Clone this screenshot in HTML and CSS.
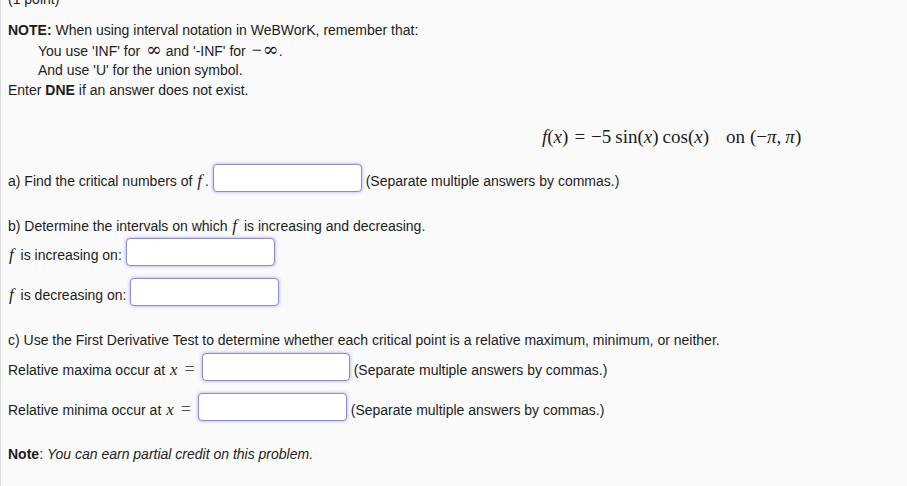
FILE: index.html
```html
<!DOCTYPE html>
<html>
<head>
<meta charset="utf-8">
<link rel="stylesheet" href="styles.css">
</head>
<body>
<div class="page">
  <div class="line points">(1 point)</div>
  <div class="note-block">
    <div class="line"><b>NOTE:</b> When using interval notation in WeBWorK, remember that:</div>
    <div class="line indent">You use 'INF' for <span class="inf">∞</span> and '-INF' for <span class="inf"><span class="minus">−</span>∞</span>.</div>
    <div class="line indent">And use 'U' for the union symbol.</div>
    <div class="line">Enter <b>DNE</b> if an answer does not exist.</div>
  </div>
  <div class="display">
    <span class="mi">f</span><span class="mr">(</span><span class="mi">x</span><span class="mr">)</span><span class="mr op">=</span><span class="mr">−5</span><span class="mr fn">sin</span><span class="mr">(</span><span class="mi">x</span><span class="mr">)</span><span class="mr fn">cos</span><span class="mr">(</span><span class="mi">x</span><span class="mr">)</span><span class="mr on">on</span><span class="mr">(−</span><span class="mi">π</span><span class="mr">,</span><span class="mi pi2">π</span><span class="mr">)</span>
  </div>
  <div class="row row-a">a) Find the critical numbers of <span class="mi fv">f</span>. <span class="ans w149"></span> (Separate multiple answers by commas.)</div>
  <div class="line row-b">b) Determine the intervals on which <span class="mi fv">f</span> is increasing and decreasing.</div>
  <div class="row row-inc"><span class="mi fv">f</span> is increasing on: <span class="ans w149"></span></div>
  <div class="row row-dec"><span class="mi fv">f</span> is decreasing on: <span class="ans w149"></span></div>
  <div class="line row-c">c) Use the First Derivative Test to determine whether each critical point is a relative maximum, minimum, or neither.</div>
  <div class="row row-max">Relative maxima occur at <span class="mi xv">x</span><span class="eq">=</span><span class="ans w148"></span> (Separate multiple answers by commas.)</div>
  <div class="row row-min">Relative minima occur at <span class="mi xv">x</span><span class="eq">=</span><span class="ans w149"></span> (Separate multiple answers by commas.)</div>
  <div class="line row-note"><b>Note</b>: <i>You can earn partial credit on this problem.</i></div>
</div>
</body>
</html>
```
FILE: styles.css
```css
html, body {
  margin: 0;
  padding: 0;
}
body {
  background: #fafafa;
  font-family: "Liberation Sans", Arial, sans-serif;
  font-size: 14px;
  color: #1c1c1c;
  height: 486px;
  overflow: hidden;
  border-left: 1px solid #d8d8d8;
  box-sizing: border-box;
}
.page {
  padding-left: 7px;
}
.line {
  height: 20px;
  line-height: 20px;
  white-space: nowrap;
}
.points {
  margin-top: -11px;
}
.note-block {
  margin-top: 11px;
}
.indent {
  padding-left: 30px;
}
.inf {
  font-family: "DejaVu Serif", "Liberation Serif", serif;
  font-size: 19px;
  line-height: 1;
  padding-left: 2px;
}
.minus {
  font-family: "Liberation Serif", serif;
  font-size: 18px;
  padding-right: 1px;
}
.mi {
  font-family: "Liberation Serif", "DejaVu Serif", serif;
  font-style: italic;
  font-size: 17px;
}
.fv {
  padding-left: 1px;
  padding-right: 3px;
}
.xv {
  padding-left: 1px;
}
.mr {
  font-family: "Liberation Serif", "DejaVu Serif", serif;
  font-size: 19px;
}
.display {
  margin-top: 27px;
  padding-left: 534px;
  height: 20px;
  line-height: 20px;
  white-space: nowrap;
}
.display .mi {
  font-size: 19px;
}
.display .op {
  padding: 0 6px;
}
.display .fn {
  padding-left: 4px;
}
.display .on {
  padding-left: 17px;
  padding-right: 5px;
}
.display .pi2 {
  padding-left: 4px;
}
.row {
  height: 20px;
  line-height: 20px;
  white-space: nowrap;
}
.ans {
  display: inline-block;
  box-sizing: border-box;
  height: 28px;
  border: 1px solid #8c8cc8;
  border-radius: 4px;
  background: #fff;
  box-shadow: 0 0 3px 1px rgba(110, 110, 220, 0.35);
  margin-top: -10px;
  margin-bottom: -6px;
  vertical-align: baseline;
}
.w149 { width: 149px; }
.w148 { width: 148px; }
.eq {
  font-family: "Liberation Serif", serif;
  font-size: 18px;
  color: #555;
  padding: 0 7px 0 7px;
}
.row-a { margin-top: 24px; }
.row-b { margin-top: 25px; }
.row-inc { margin-top: 9px; }
.row-dec { margin-top: 20px; }
.row-c { margin-top: 25px; }
.row-max { margin-top: 9px; }
.row-min { margin-top: 20px; }
.row-note { margin-top: 25px; }
```
